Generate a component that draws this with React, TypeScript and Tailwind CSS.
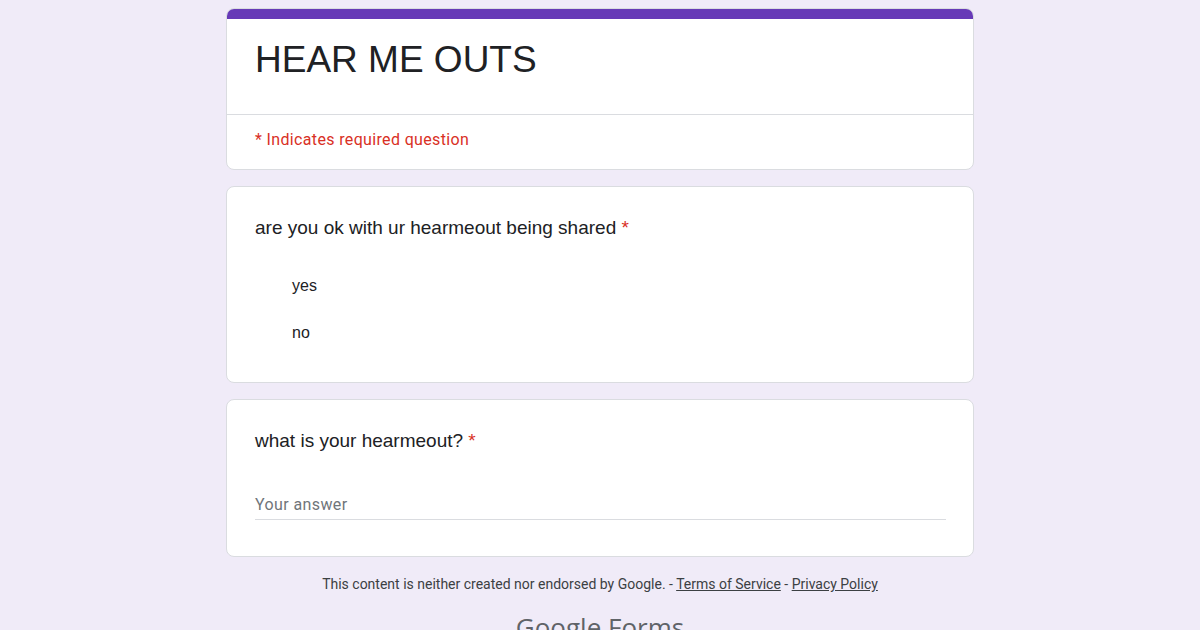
export default function App() {
  const options = ["yes", "no"];

  return (
    <div className="min-h-screen bg-[#f0ebf8] font-['Liberation_Sans',Arial,sans-serif] text-[#202124] pt-[8px]">
      <div className="w-[748px] mx-auto flex flex-col gap-[16px]">
        {/* header card */}
        <div className="bg-white rounded-lg border border-[#dadce0] overflow-hidden">
          <div className="h-[11px] bg-[#673ab7] -mx-px -mt-px"></div>
          <div className="px-[28px] pt-[19px] pb-[32px] border-b border-[#dadce0]">
            <h1 className="text-[37px] leading-[44px]">HEAR ME OUTS</h1>
          </div>
          <div className="px-[28px] pt-[15px] pb-[19px]">
            <p className="font-['Roboto',sans-serif] text-[16px] leading-[20px] tracking-[0.35px] text-[#d93025]">
              * Indicates required question
            </p>
          </div>
        </div>

        {/* radio question */}
        <div className="bg-white rounded-lg border border-[#dadce0] px-[28px] pt-[29px] pb-[26px]">
          <div className="text-[19px] leading-[24px]">
            are you ok with ur hearmeout being shared <span className="text-[#d93025]">*</span>
          </div>
          <div className="mt-[22px] flex flex-col">
            {options.map((o) => (
              <div key={o} className="h-[47px] flex items-center pl-[37px] text-[16px]">
                {o}
              </div>
            ))}
          </div>
        </div>

        {/* text question */}
        <div className="bg-white rounded-lg border border-[#dadce0] px-[28px] pt-[29px] pb-[36px]">
          <div className="text-[19px] leading-[24px]">
            what is your hearmeout? <span className="text-[#d93025]">*</span>
          </div>
          <div className="mt-[42px] border-b border-[#dadce0] pb-[4px] w-[691px] font-['Roboto',sans-serif] text-[16px] leading-[20px] tracking-[0.4px] text-[#70757a]">
            Your answer
          </div>
        </div>
      </div>

      <footer className="mt-[17px] text-center font-['Roboto',sans-serif] text-[14px] leading-[20px] text-[#3c4043]">
        This content is neither created nor endorsed by Google. -{" "}
        <a className="underline">Terms of Service</a> - <a className="underline">Privacy Policy</a>
      </footer>
      <div className="mt-[17px] text-center font-['Open_Sans',sans-serif] text-[26px] leading-[32px] text-[#5f6368]">
        Google Forms
      </div>
    </div>
  );
}
